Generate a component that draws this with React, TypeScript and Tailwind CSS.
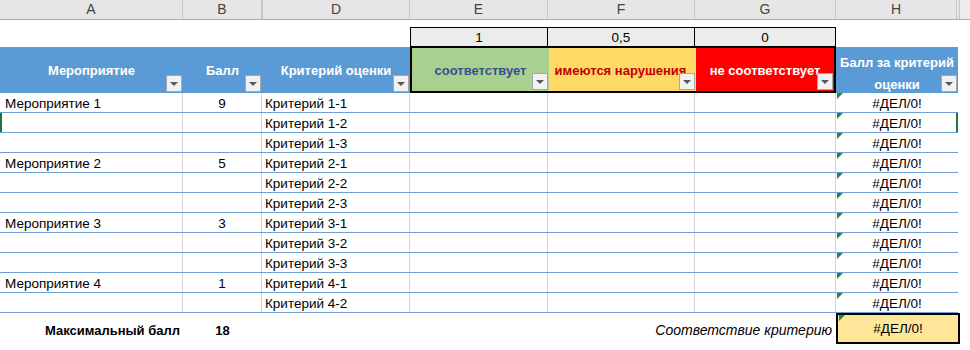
import React from "react"

const font = "font-['Liberation_Sans',Arial,sans-serif]"

const rows = [
  { a: "Мероприятие 1", b: "9", d: "Критерий 1-1" },
  { a: "", b: "", d: "Критерий 1-2" },
  { a: "", b: "", d: "Критерий 1-3" },
  { a: "Мероприятие 2", b: "5", d: "Критерий 2-1" },
  { a: "", b: "", d: "Критерий 2-2" },
  { a: "", b: "", d: "Критерий 2-3" },
  { a: "Мероприятие 3", b: "3", d: "Критерий 3-1" },
  { a: "", b: "", d: "Критерий 3-2" },
  { a: "", b: "", d: "Критерий 3-3" },
  { a: "Мероприятие 4", b: "1", d: "Критерий 4-1" },
  { a: "", b: "", d: "Критерий 4-2" },
]

// little autofilter dropdown in the corner of a header cell
function FilterButton() {
  return (
    <span className="absolute right-[1px] bottom-[1px] w-[16px] h-[17px] bg-[#f2f2f2] border border-[#a6a6a6] flex items-center justify-center">
      <span className="w-0 h-0 border-l-[4px] border-r-[4px] border-t-[4px] border-l-transparent border-r-transparent border-t-[#595959]" />
    </span>
  )
}

function ErrorMark() {
  return <span className="absolute left-[1px] top-0 w-0 h-0 border-t-[6px] border-r-[6px] border-t-[#1c8a3a] border-r-transparent" />
}

export default function App() {
  return (
    <div className={`${font} w-[970px] h-[350px] bg-white overflow-hidden text-[13.5px] text-black`}>
      {/* column letters */}
      <div className="flex h-[20px] bg-[#e6e6e6] border-b border-[#ababab] text-[14px] text-[#444]">
        <div className="w-[183px] border-r border-[#c6c6c6] flex items-center justify-center">A</div>
        <div className="w-[79px] border-r border-[#c6c6c6] flex items-center justify-center">B</div>
        <div className="w-[148px] border-l border-r border-[#c6c6c6] flex items-center justify-center">D</div>
        <div className="w-[138px] border-r border-[#c6c6c6] flex items-center justify-center">E</div>
        <div className="w-[147px] border-r border-[#c6c6c6] flex items-center justify-center">F</div>
        <div className="w-[141px] border-r border-[#c6c6c6] flex items-center justify-center">G</div>
        <div className="w-[121px] border-r border-[#c6c6c6] flex items-center justify-center">H</div>
        <div className="w-[3px] border-r border-[#c6c6c6]" />
        <div className="flex-1 bg-[#eeeeee]" />
      </div>

      <div className="h-[7px]" />

      {/* weights row */}
      <div className="flex h-[20px]">
        <div className="w-[410px]" />
        <div className="w-[138px] bg-[#ececec] border-t border-l border-r border-black flex items-center justify-center pt-[2px]">1</div>
        <div className="w-[147px] bg-[#ececec] border-t border-r border-black flex items-center justify-center pt-[2px]">0,5</div>
        <div className="w-[141px] bg-[#ececec] border-t border-r border-black flex items-center justify-center pt-[2px]">0</div>
      </div>

      {/* table header */}
      <div className="flex h-[46px] font-bold text-[13px]">
        <div className="relative w-[183px] bg-[#5b9bd5] text-white flex items-center justify-center pt-[2px]">
          Мероприятие
          <FilterButton />
        </div>
        <div className="relative w-[79px] bg-[#5b9bd5] text-white flex items-center justify-center pt-[2px]">
          Балл
          <FilterButton />
        </div>
        <div className="relative w-[148px] bg-[#5b9bd5] text-white flex items-center justify-center pt-[2px]">
          Критерий оценки
          <FilterButton />
        </div>
        <div className="flex w-[426px] -mt-px h-[47px] border-2 border-black">
          <div className="relative w-[137px] bg-[#a9d08e] text-[#35508f] flex items-center justify-center pt-[2px]">
            соответствует
            <FilterButton />
          </div>
          <div className="relative w-[147px] bg-[#ffd966] text-[#c00000] flex items-center justify-center pt-[2px] pr-[4px]">
            имеются нарушения
            <FilterButton />
          </div>
          <div className="relative flex-1 bg-[#ff0000] text-white flex items-center justify-center pt-[2px]">
            не соответствует
            <FilterButton />
          </div>
        </div>
        <div className="relative w-[122px] bg-[#5b9bd5] text-white flex flex-col items-center justify-center pt-[7px] leading-[22px]">
          <span>Балл за критерий</span>
          <span>оценки</span>
          <FilterButton />
        </div>
      </div>

      {/* data rows */}
      {rows.map((r, i) => (
        <div key={i} className="relative flex w-[958px] h-[20px] border-b border-[#6e9fd6]">
          {i === 1 && <span className="absolute left-0 top-0 bottom-0 w-[2px] bg-[#217346]" />}
          <div className="w-[183px] border-r border-[#d4d4d4] pl-[5px] pt-[4px] flex items-center">{r.a}</div>
          <div className="w-[79px] border-r border-[#d4d4d4] pt-[4px] flex items-center justify-center">{r.b}</div>
          <div className="w-[148px] border-r border-[#d4d4d4] pl-[3px] pt-[4px] flex items-center">{r.d}</div>
          <div className="w-[138px] border-r border-[#d4d4d4]" />
          <div className="w-[147px] border-r border-[#d4d4d4]" />
          <div className="w-[141px] border-r border-[#d4d4d4]" />
          <div className="relative flex-1 flex items-center justify-center pt-[4px]">
            <ErrorMark />
            #ДЕЛ/0!
            {i === 1 && <span className="absolute right-0 top-0 bottom-0 w-[2px] bg-[#217346]" />}
          </div>
        </div>
      ))}

      {/* totals */}
      <div className="flex h-[37px]">
        <div className="w-[183px] font-bold text-[13px] flex items-center justify-end pr-[3px] pb-[2px]">Максимальный балл</div>
        <div className="w-[79px] font-bold text-[13px] flex items-center justify-center pb-[2px]">18</div>
        <div className="w-[574px] italic text-[14px] flex items-center justify-end pr-[4px] pb-[2px]">Соответствие критерию</div>
        <div className="relative w-[124px] h-[31px] bg-[#ffe699] border-2 border-black flex items-center justify-center pt-[1px]">
          <ErrorMark />
          #ДЕЛ/0!
        </div>
      </div>
    </div>
  )
}
